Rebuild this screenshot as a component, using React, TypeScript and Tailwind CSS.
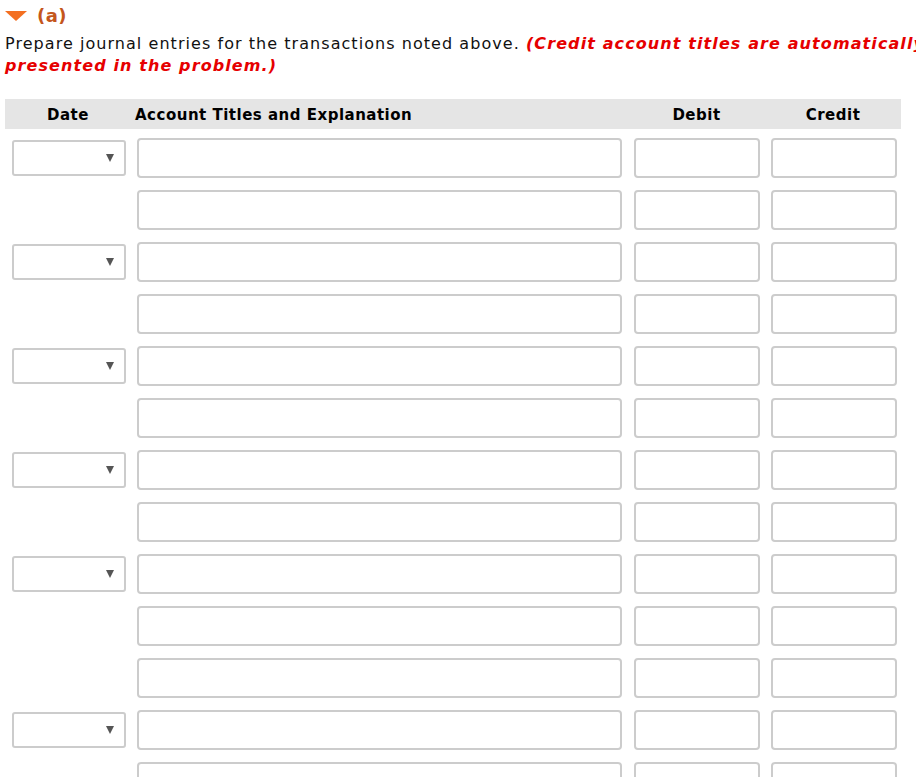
const groups = [2, 2, 2, 2, 3, 2];

const font = { fontFamily: '"DejaVu Sans", Verdana, sans-serif' };

const Field = ({ className = '' }: { className?: string }) => (
    <div className={`h-[40px] border-2 border-[#cccccc] rounded-[4px] bg-white ${className}`} />
);

const DateSelect = () => (
    <div className="relative h-[36px] w-[114px] border-2 border-[#cccccc] rounded-[3px] bg-white">
        <span className="absolute right-[10px] top-[12px] w-0 h-0 border-l-[4px] border-r-[4px] border-t-[8px] border-l-transparent border-r-transparent border-t-[#555555]" />
    </div>
);

const Row = ({ withDate }: { withDate: boolean }) => (
    <div className="grid grid-cols-[126px_497px_137px_136px] h-[52px] items-center">
        <div className="pl-[7px]">{withDate ? <DateSelect /> : null}</div>
        <div className="pl-[6px] pr-[6px]">
            <Field />
        </div>
        <div className="pl-[6px] pr-[5px]">
            <Field />
        </div>
        <div className="pl-[6px] pr-[4px]">
            <Field />
        </div>
    </div>
);

export default function App() {
    return (
        <div className="w-[916px] min-h-[777px] bg-white overflow-hidden" style={font}>
            {/* Part heading */}
            <div className="flex items-center gap-[10px] pl-[5px] pt-[5px] h-[27px]">
                <span className="w-0 h-0 border-l-[11px] border-r-[11px] border-t-[10px] border-l-transparent border-r-transparent border-t-[#f36f21]" />
                <span className="text-[18px] font-bold text-[#c4561c] leading-none tracking-[0.5px]">(a)</span>
            </div>

            {/* Instructions */}
            <div className="pl-[5px] pt-[6px] text-[16px] leading-[22px] text-[#111111] whitespace-nowrap tracking-[1.05px] overflow-hidden">
                <div>
                    Prepare journal entries for the transactions noted above.{' '}
                    <span className="font-bold italic text-[#e60000] tracking-[1.1px]">(Credit account titles are automatically</span>
                </div>
                <div className="font-bold italic text-[#e60000] tracking-[1.1px]">presented in the problem.)</div>
            </div>

            {/* Table */}
            <div className="ml-[5px] mt-[22px] w-[896px]">
                <div className="grid grid-cols-[126px_497px_137px_136px] h-[30px] items-center bg-[#e5e5e5] text-[15px] font-bold text-black tracking-[0.5px]">
                    <div className="text-center pt-[2px]">Date</div>
                    <div className="pl-[4px] pt-[2px]">Account Titles and Explanation</div>
                    <div className="text-center pt-[2px]">Debit</div>
                    <div className="text-center pt-[2px]">Credit</div>
                </div>
                <div className="pt-[3px]">
                    {groups.map((n, g) =>
                        Array.from({ length: n }).map((_, i) => <Row key={`${g}-${i}`} withDate={i === 0} />)
                    )}
                </div>
            </div>
        </div>
    );
}
